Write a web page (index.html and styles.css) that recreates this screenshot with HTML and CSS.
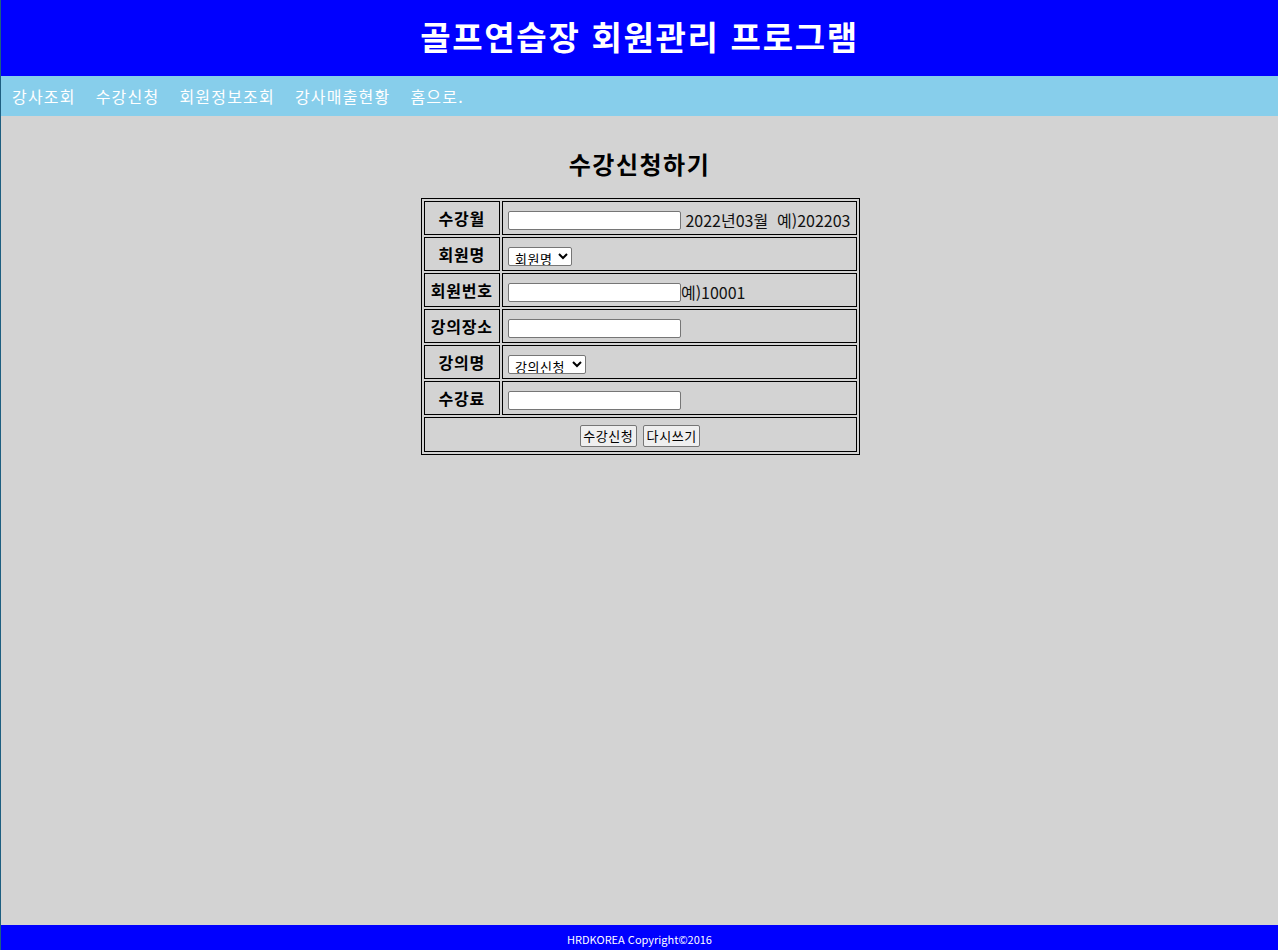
FILE: index.html
```html
<!DOCTYPE html>
<html lang="ko">
<head>
<meta charset="utf-8">
<title>골프연습장 회원관리 프로그램</title>
<link rel="stylesheet" href="styles.css">
</head>
<body>
<div class="page">
  <header class="header">
    <h1 class="title">골프연습장 회원관리 프로그램</h1>
  </header>
  <nav class="nav">
    <a class="nav-link" href="#">강사조회</a>
    <a class="nav-link" href="#">수강신청</a>
    <a class="nav-link" href="#">회원정보조회</a>
    <a class="nav-link" href="#">강사매출현황</a>
    <a class="nav-link" href="#">홈으로.</a>
  </nav>
  <main class="section">
    <h2 class="heading">수강신청하기</h2>
    <form class="form">
      <table class="form-table">
        <tr>
          <th class="label">수강월</th>
          <td class="value"><input class="text-input" type="text"> <span class="hint">2022년03월 &nbsp;예)202203</span></td>
        </tr>
        <tr>
          <th class="label">회원명</th>
          <td class="value"><select class="select select-member"><option>회원명</option></select></td>
        </tr>
        <tr>
          <th class="label">회원번호</th>
          <td class="value"><input class="text-input" type="text"><span class="hint">예)10001</span></td>
        </tr>
        <tr>
          <th class="label">강의장소</th>
          <td class="value"><input class="text-input" type="text"></td>
        </tr>
        <tr>
          <th class="label">강의명</th>
          <td class="value"><select class="select select-class"><option>강의신청</option></select></td>
        </tr>
        <tr>
          <th class="label">수강료</th>
          <td class="value"><input class="text-input" type="text"></td>
        </tr>
        <tr>
          <td class="actions" colspan="2">
            <button class="btn" type="button">수강신청</button>
            <button class="btn" type="reset">다시쓰기</button>
          </td>
        </tr>
      </table>
    </form>
  </main>
  <footer class="footer">HRDKOREA Copyright©2016</footer>
</div>
</body>
</html>
```

FILE: styles.css
```css
html, body {
  margin: 0;
  padding: 0;
  height: 100%;
}

body {
  font-family: "Noto Sans CJK KR", "Noto Sans", sans-serif;
  background: #d3d3d3;
}

.page {
  display: flex;
  flex-direction: column;
  height: 950px;
  border-left: 1px solid #1d5e80;
}

.header {
  background: #0000ff;
  height: 76px;
  display: flex;
  align-items: center;
  justify-content: center;
}

.title {
  margin: 0;
  color: #ffffff;
  font-size: 33px;
  font-weight: bold;
  line-height: 1;
  letter-spacing: 1.7px;
  padding-bottom: 4px;
}

.nav {
  background: #87ceeb;
  height: 40px;
  display: flex;
  align-items: center;
  gap: 20px;
  padding-left: 11px;
}

.nav-link {
  color: #ffffff;
  text-decoration: none;
  font-size: 16px;
  letter-spacing: 1.2px;
}

.section {
  flex: 1;
  display: flex;
  flex-direction: column;
  align-items: center;
}

.heading {
  margin: 31px 0 17px;
  font-size: 24px;
  font-weight: bold;
  line-height: 34px;
  letter-spacing: 1.5px;
  color: #000;
}

.form {
  margin: 0 0 0 1px;
}

.form-table {
  width: 439px;
  border: 1px solid #000;
  border-collapse: separate;
  border-spacing: 2px;
}

.label,
.value,
.actions {
  border: 1px solid #000;
  height: 32px;
  padding: 0 5px;
}

.label {
  width: 65px;
  font-size: 16px;
  font-weight: bold;
  text-align: center;
  letter-spacing: 0.8px;
  color: #000;
  white-space: nowrap;
}

.value {
  font-size: 16px;
  color: #111;
  white-space: nowrap;
}

.actions {
  text-align: center;
  height: 33px;
}

.text-input {
  box-sizing: border-box;
  width: 173px;
  height: 19px;
  border: 1px solid #767676;
  border-radius: 2px;
  background: #fff;
  padding: 0 2px;
  vertical-align: middle;
  margin: 0;
}

.hint {
  font-size: 16px;
  line-height: 18px;
  vertical-align: middle;
  position: relative;
  top: -1px;
}

.select {
  box-sizing: border-box;
  height: 19px;
  font-family: "Noto Sans CJK KR", sans-serif;
  font-size: 13px;
  line-height: 15px;
  letter-spacing: 0.6px;
  border: 1px solid #767676;
  border-radius: 2px;
  background: #fff;
  color: #000;
  padding: 0 0 0 2px;
  margin: 0;
  vertical-align: middle;
}

.select-member {
  width: 64px;
}

.select-class {
  width: 78px;
}

.btn {
  box-sizing: border-box;
  height: 22px;
  width: 57px;
  font-family: "Noto Sans CJK KR", sans-serif;
  font-size: 13px;
  letter-spacing: 0.6px;
  padding: 0 0 1px;
  border: 1px solid #767676;
  border-radius: 2px;
  background: #efefef;
  color: #000;
  margin: 0 1px;
  vertical-align: middle;
}

.footer {
  background: #0000ff;
  height: 25px;
  color: #ffffff;
  font-size: 11px;
  display: flex;
  align-items: center;
  justify-content: center;
  padding-top: 2px;
  box-sizing: border-box;
}
```
